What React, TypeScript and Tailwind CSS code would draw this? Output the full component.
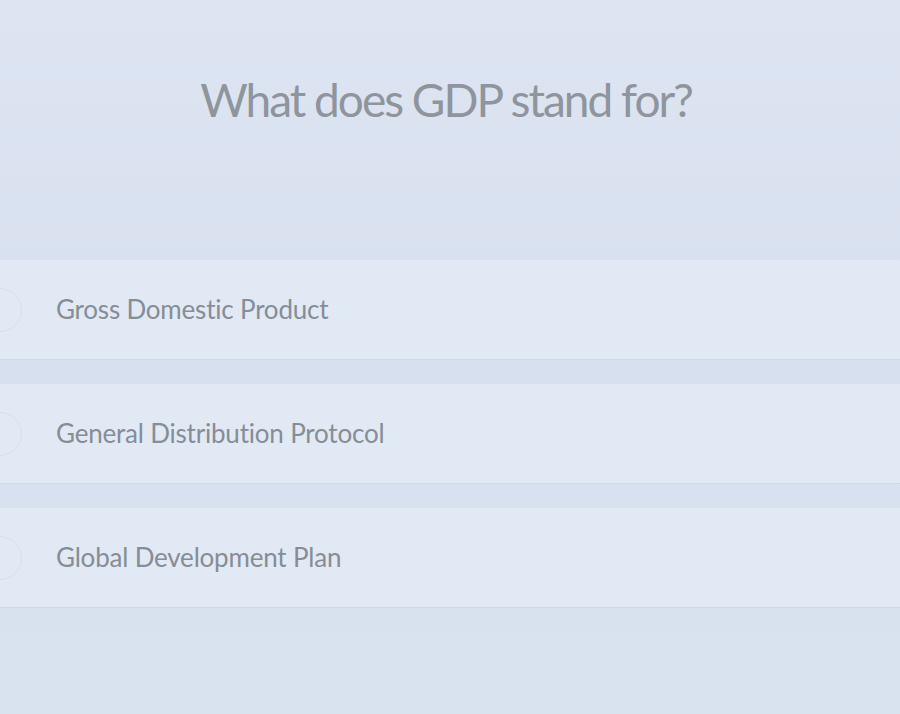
const options = [
  "Gross Domestic Product",
  "General Distribution Protocol",
  "Global Development Plan",
];

export default function App() {
  return (
    <div
      className="w-[900px] h-[714px] overflow-hidden bg-gradient-to-b from-[#dde5f3] via-[#d7e0ee] to-[#d9e2ef] flex flex-col"
      style={{ fontFamily: "Lato, 'Open Sans', sans-serif" }}
    >
      <div className="h-[260px] flex justify-center pt-[73px] pr-[8px]">
        <h1 className="text-[46px] leading-[54px] text-[#8f959d] tracking-[-2px]">
          What does GDP stand for?
        </h1>
      </div>
      <div className="flex flex-col gap-[24px]">
        {options.map((opt) => (
          <div
            key={opt}
            className="h-[100px] bg-[#e1e9f5] border-b border-[#d0d8e4] flex items-center"
          >
            <div className="w-[44px] h-[44px] rounded-full border border-[#d8dfea] -ml-[22px] shrink-0" />
            <span className="ml-[34px] text-[26px] text-[#868d96] tracking-[-0.2px]">
              {opt}
            </span>
          </div>
        ))}
      </div>
    </div>
  );
}
